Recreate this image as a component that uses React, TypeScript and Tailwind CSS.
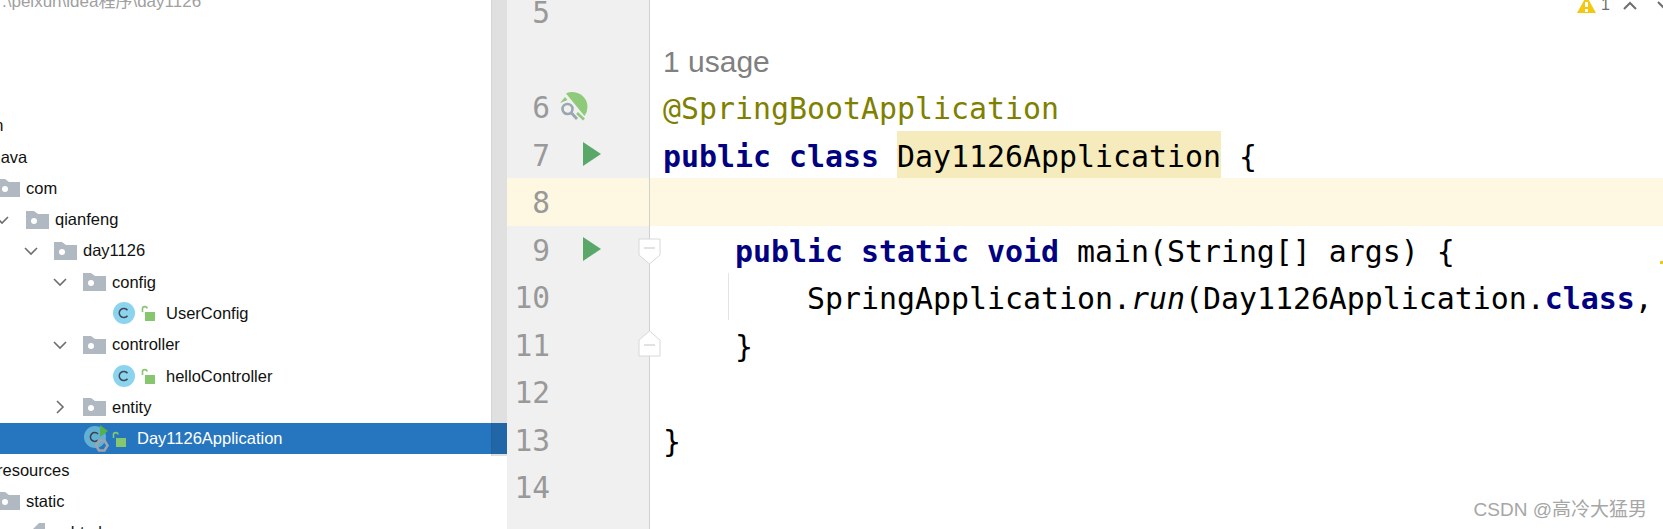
const sans = "font-['Liberation_Sans','Noto_Sans_CJK_SC',sans-serif]";
const mono = "font-['DejaVu_Sans_Mono',monospace]";

function Folder() {
  return (
    <svg width="23" height="18" viewBox="0 0 23 18" className="shrink-0">
      <path d="M0 0H8L12 3H23V18H0Z" fill="#b0b9c1" />
      <circle cx="8" cy="10" r="3" fill="#fff" />
    </svg>
  );
}

function Chevron({ open }: { open: boolean }) {
  return (
    <svg width="16" height="16" viewBox="0 0 16 16" className="shrink-0">
      <path d={open ? "M2 5L8 11L14 5" : "M5 2L11 8L5 14"} fill="none" stroke="#6e6e6e" strokeWidth="1.6" />
    </svg>
  );
}

function Lock() {
  return (
    <svg width="14" height="16" viewBox="0 0 14 16" className="shrink-0">
      <rect x="4" y="7" width="10" height="9" fill="#86c66f" />
      <path d="M1.5 7V3.5C1.5 1 6 1 6 3.5" fill="none" stroke="#86c66f" strokeWidth="1.6" />
    </svg>
  );
}

function ClassIcon() {
  return (
    <svg width="22" height="22" viewBox="0 0 22 22" className="shrink-0">
      <circle cx="11" cy="11" r="11" fill="#8cd3ee" />
      <path d="M14.5 8.2A4.6 4.6 0 1 0 14.5 13.8" fill="none" stroke="#3d4a55" strokeWidth="1.5" />
    </svg>
  );
}

function RunClassIcon() {
  return (
    <svg width="26" height="28" viewBox="0 0 26 28" className="shrink-0">
      <circle cx="11" cy="12" r="11" fill="#62b0d4" />
      <path d="M14 9A4.4 4.4 0 1 0 14 15" fill="none" stroke="#39424a" strokeWidth="1.5" />
      <path d="M16 0L24 6L16 12Z" fill="#55b04d" />
      <path d="M15 15.5L20.5 15.5L23.5 20.5L20.5 25.5L15 25.5L12 20.5Z" fill="none" stroke="#9aa5ae" strokeWidth="2.6" />
    </svg>
  );
}

function TreeRow({ children, className = "", selected = false }: { children: React.ReactNode; className?: string; selected?: boolean }) {
  return (
    <div className={`flex h-[31.3px] shrink-0 items-center whitespace-nowrap ${selected ? "bg-[#2675bf] text-white" : "text-[#111]"} ${className}`}>
      {children}
    </div>
  );
}

function Tree() {
  return (
    <div className={`relative w-[507px] shrink-0 overflow-hidden bg-white text-[16.5px] ${sans}`}>
      <div className="mt-[-9px] h-[26px] pl-[2px] text-[17px] leading-[22px] text-[#a0a0a0]">.\peixun\idea程序\day1126</div>
      <div className="h-[93px]" />
      <TreeRow className="ml-[-15px]">on</TreeRow>
      <TreeRow className="ml-[-3px]">java</TreeRow>
      <TreeRow className="ml-[-3px] gap-[6px]"><Folder />com</TreeRow>
      <TreeRow className="ml-[-6px]"><Chevron open /><span className="w-[16px]" /><span className="flex items-center gap-[6px]"><Folder />qianfeng</span></TreeRow>
      <TreeRow className="pl-[23px]"><Chevron open /><span className="w-[15px]" /><span className="flex items-center gap-[6px]"><Folder />day1126</span></TreeRow>
      <TreeRow className="pl-[52px]"><Chevron open /><span className="w-[15px]" /><span className="flex items-center gap-[6px]"><Folder />config</span></TreeRow>
      <TreeRow className="pl-[113px]"><ClassIcon /><span className="w-[6px]" /><Lock /><span className="w-[11px]" />UserConfig</TreeRow>
      <TreeRow className="pl-[52px]"><Chevron open /><span className="w-[15px]" /><span className="flex items-center gap-[6px]"><Folder />controller</span></TreeRow>
      <TreeRow className="pl-[113px]"><ClassIcon /><span className="w-[6px]" /><Lock /><span className="w-[11px]" />helloController</TreeRow>
      <TreeRow className="pl-[52px]"><Chevron open={false} /><span className="w-[15px]" /><span className="flex items-center gap-[6px]"><Folder />entity</span></TreeRow>
      <TreeRow selected className="pl-[84px]"><RunClassIcon /><span className="w-[2px]" /><Lock /><span className="w-[11px]" />Day1126Application</TreeRow>
      <TreeRow className="ml-[-3px]">resources</TreeRow>
      <TreeRow className="ml-[-3px] gap-[6px]"><Folder />static</TreeRow>
      <TreeRow className="pl-[29px] gap-[12px]">
        <svg width="16" height="22" viewBox="0 0 16 22" className="shrink-0">
          <path d="M0 11L10 1H16V22H0Z" fill="#b0b9c1" />
        </svg>
        a.html
      </TreeRow>
      <div className="absolute right-0 top-0 h-[456px] w-[16px] border-l border-black/5 bg-black/12" />
    </div>
  );
}

function Line({ n, code, marker, bg = "", gutterBg = "bg-[#f0f0f0]" }: { n: string; code?: React.ReactNode; marker?: React.ReactNode; bg?: string; gutterBg?: string }) {
  return (
    <div className={`flex h-[47.5px] shrink-0 ${bg}`}>
      <div className={`relative w-[143px] shrink-0 border-r border-[#d0d0d0] ${gutterBg}`}>
        <div className="w-[43px] text-right text-[#999] text-[29.5px] leading-[51.5px]">{n}</div>
        {marker}
      </div>
      <div className="h-full whitespace-pre pl-[13px] leading-[51.5px] text-[#000]">{code}</div>
    </div>
  );
}

function Run() {
  return (
    <svg width="18" height="24" viewBox="0 0 18 24" className="absolute left-[76px] top-[11px]">
      <path d="M0 0L18 12L0 24Z" fill="#59a869" />
    </svg>
  );
}

function Fold({ up }: { up?: boolean }) {
  return (
    <svg width="23" height="27" viewBox="0 0 23 27" className={`absolute left-[131px] z-10 ${up ? "top-[9px]" : "top-[12px]"}`}>
      <path d={up ? "M1 26V10L11.5 1L22 10V26Z" : "M1 1V17L11.5 26L22 17V1Z"} fill="#fff" stroke="#d8d8d8" />
      <path d={up ? "M6 15H17" : "M6 10H17"} stroke="#c4c4c4" />
    </svg>
  );
}

function Spring() {
  return (
    <svg width="31" height="31" viewBox="0 0 31 31" className="absolute left-[53px] top-[9px]">
      <path d="M6 1.5A15 15 0 0 1 24.5 24Z" fill="#8fc97a" />
      <path d="M0 11L5 5L7.5 8Z" fill="#8fc97a" />
      <path d="M17 21L24 27.5" stroke="#8fc97a" strokeWidth="2.6" />
      <circle cx="7.5" cy="17" r="5" fill="#f0f0f0" stroke="#9aa7b0" strokeWidth="2.6" />
      <path d="M11 20.5L17 27" stroke="#9aa7b0" strokeWidth="2.8" />
    </svg>
  );
}

const kw = "font-bold text-[#000080]";

function Editor() {
  return (
    <div className={`relative min-w-0 flex-1 overflow-hidden bg-white text-[29.9px] ${mono}`}>
      <div className="mt-[-12px] flex flex-col">
        <Line n="5" />
        <Line n="" code={<span className={`text-[30px] text-[#808080] ${sans}`}>1 usage</span>} />
        <Line n="6" marker={<Spring />} code={<span className="text-[#808000]">@SpringBootApplication</span>} />
        <Line n="7" marker={<Run />} code={<><span className={kw}>public class</span> <span className="inline-block h-[47.5px] bg-[#f6ebbc] leading-[51.5px]">Day1126Application</span> {"{"}</>} />
        <Line n="8" bg="bg-[#fef8e3]" gutterBg="bg-[#fef8e3]" />
        <Line n="9" marker={<><Run /><Fold /></>} code={<>{"    "}<span className={kw}>public static void</span> main(String[] args) {"{"}</>} />
        <Line n="10" code={<>{"        "}SpringApplication.<i>run</i>(Day1126Application.<span className={kw}>class</span>,</>} />
        <Line n="11" marker={<Fold up />} code={<>{"    }"}</>} />
        <Line n="12" />
        <Line n="13" code="}" />
        <Line n="14" />
        <Line n="" />
      </div>
      <div className="absolute left-[221px] top-[273px] h-[47px] w-px bg-[#e4e4e4]" />
      <div className="absolute right-0 top-[261px] h-[3px] w-[3px] bg-[#f2c811]" />
      <div className={`absolute right-[53px] top-[-4px] flex items-start text-[16px] leading-[17px] text-[#6e6e6e] ${sans}`}>
        <svg width="19" height="17" viewBox="0 0 19 17">
          <path d="M9.5 0L19 17H0Z" fill="#f2c811" />
          <rect x="8" y="6" width="3" height="5" fill="#fff" />
          <rect x="8" y="13" width="3" height="3" fill="#fff" />
        </svg>
        <span className="ml-[5px]">1</span>
      </div>
      <svg width="14" height="9" viewBox="0 0 14 9" className="absolute right-[26px] top-[1px]"><path d="M1 8L7 2L13 8" fill="none" stroke="#6e6e6e" strokeWidth="2" /></svg>
      <svg width="14" height="9" viewBox="0 0 14 9" className="absolute right-[-8px] top-[1px]"><path d="M1 1L7 7L13 1" fill="none" stroke="#6e6e6e" strokeWidth="2" /></svg>
      <span className={`absolute right-[16px] top-[498px] text-[19px] leading-[24px] text-[#a6a6a6] ${sans}`}>CSDN @高冷大猛男</span>
    </div>
  );
}

export default function App() {
  return (
    <div className="flex h-[529px] w-[1663px] overflow-hidden bg-white">
      <Tree />
      <Editor />
    </div>
  );
}
